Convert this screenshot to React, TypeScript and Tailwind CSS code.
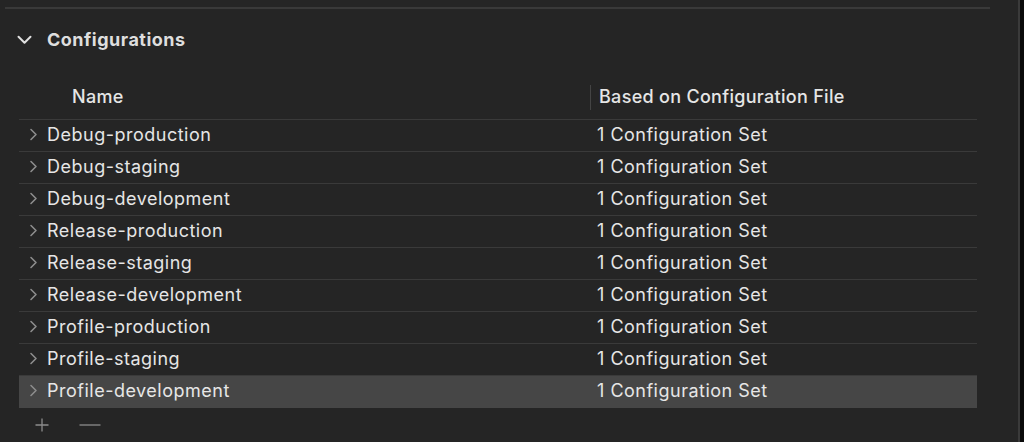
import React from 'react';

const configs = [
  'Debug-production',
  'Debug-staging',
  'Debug-development',
  'Release-production',
  'Release-staging',
  'Release-development',
  'Profile-production',
  'Profile-staging',
  'Profile-development',
];

const Chevron = ({ down }: { down?: boolean }) =>
  down ? (
    <svg width="15" height="10" viewBox="0 0 15 10" fill="none" className="text-[#e0e0e0]">
      <path d="M1.5 1.8 L7.5 7.8 L13.5 1.8" stroke="currentColor" strokeWidth="2" strokeLinecap="round" strokeLinejoin="round" />
    </svg>
  ) : (
    <svg width="10" height="13" viewBox="0 0 10 13" fill="none" className="text-[#8c8c8c]">
      <path d="M3 1.5 L8 6.5 L3 11.5" stroke="currentColor" strokeWidth="1.6" strokeLinecap="round" strokeLinejoin="round" />
    </svg>
  );

export default function App() {
  return (
    <div
      className="w-[1024px] h-[442px] bg-[#252525] flex overflow-hidden text-[#e6e6e6]"
      style={{ fontFamily: 'Inter, "Noto Sans", sans-serif' }}
    >
      <div className="flex-1 flex flex-col">
        <div className="pt-[7px] pl-[5px] pr-[28px]">
          <div className="h-[2px] bg-[#393939]" />
        </div>

        <div className="flex items-center h-[48px] mt-[9px] pl-[17px]">
          <Chevron down />
          <span className="ml-[15px] text-[18px] tracking-[0.5px] font-bold text-[#dedede]">Configurations</span>
        </div>

        <div className="ml-[19px] w-[958px] mt-[24px]">
          <div className="flex items-start h-[35px] border-b border-[#3a3a3a]">
            <div className="w-[571px] pl-[53px] h-[24px] leading-[24px] text-[18px] tracking-[0.3px] font-medium">Name</div>
            <div className="h-[25px] w-px bg-[#444]" />
            <div className="pl-[8px] h-[24px] leading-[24px] text-[18px] tracking-[0.3px] font-medium">
              Based on Configuration File
            </div>
          </div>
          {configs.map((name, i) => {
            const last = i === configs.length - 1;
            return (
              <div
                key={name}
                className={`flex items-center h-[32px] pb-[3px] text-[18px] tracking-[0.5px] ${
                  last ? 'bg-[#464646]' : 'border-b border-[#3a3a3a]'
                }`}
              >
                <div className="w-[578px] flex items-center pl-[9px]">
                  <Chevron />
                  <span className="ml-[9px]">{name}</span>
                </div>
                <div>1 Configuration Set</div>
              </div>
            );
          })}
          <div className="flex items-center h-[34px] pl-[16px] gap-[30px] text-[#8c8c8c]">
            <svg width="14" height="14" viewBox="0 0 14 14">
              <path d="M7 0.5 V13.5 M0.5 7 H13.5" stroke="currentColor" strokeWidth="1.3" />
            </svg>
            <svg width="22" height="14" viewBox="0 0 22 14">
              <path d="M0.5 7 H21.5" stroke="currentColor" strokeWidth="1.3" />
            </svg>
          </div>
        </div>
      </div>
      <div className="w-[2px] bg-[#3a3a3a]" />
      <div className="w-[4px] bg-[#0a0a0a]" />
    </div>
  );
}
